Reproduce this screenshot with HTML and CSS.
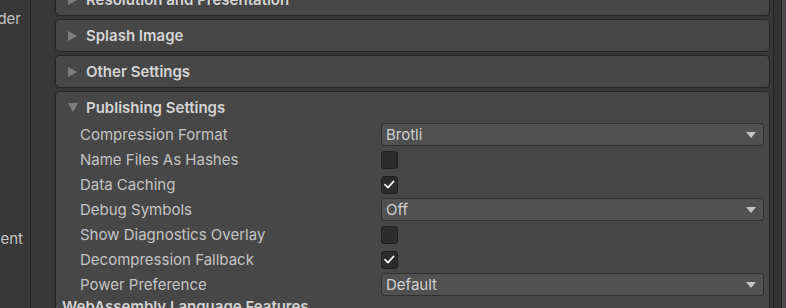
FILE: index.html
```html
<!DOCTYPE html>
<html>
<head>
<meta charset="utf-8">
<link rel="stylesheet" href="styles.css">
</head>
<body>
<div class="app">
  <div class="side">
    <div class="side-item first">der</div>
    <div class="side-item second">ent</div>
  </div>
  <div class="gutter"></div>
  <div class="main">
    <div class="foldout scrolled">
      <div class="fold-head"><span class="arrow right"></span><span class="title">Resolution and Presentation</span></div>
    </div>
    <div class="foldout">
      <div class="fold-head"><span class="arrow right"></span><span class="title">Splash Image</span></div>
    </div>
    <div class="foldout">
      <div class="fold-head"><span class="arrow right"></span><span class="title">Other Settings</span></div>
    </div>
    <div class="foldout open">
      <div class="fold-head"><span class="arrow down"></span><span class="title">Publishing Settings</span></div>
      <div class="rows">
        <div class="row"><span class="label">Compression Format</span><div class="field"><div class="dropdown"><span>Brotli</span><span class="caret"></span></div></div></div>
        <div class="row"><span class="label">Name Files As Hashes</span><div class="field"><div class="check"></div></div></div>
        <div class="row"><span class="label">Data Caching</span><div class="field"><div class="check on"><svg viewBox="0 0 17 17" width="17" height="17"><polyline points="4,8.6 7,11.6 12.6,5.4" fill="none" stroke="#f2f2f2" stroke-width="1.8" stroke-linecap="round" stroke-linejoin="round"/></svg></div></div></div>
        <div class="row"><span class="label">Debug Symbols</span><div class="field"><div class="dropdown"><span>Off</span><span class="caret"></span></div></div></div>
        <div class="row"><span class="label">Show Diagnostics Overlay</span><div class="field"><div class="check"></div></div></div>
        <div class="row"><span class="label">Decompression Fallback</span><div class="field"><div class="check on"><svg viewBox="0 0 17 17" width="17" height="17"><polyline points="4,8.6 7,11.6 12.6,5.4" fill="none" stroke="#f2f2f2" stroke-width="1.8" stroke-linecap="round" stroke-linejoin="round"/></svg></div></div></div>
        <div class="row"><span class="label">Power Preference</span><div class="field"><div class="dropdown"><span>Default</span><span class="caret"></span></div></div></div>
      </div>
      <div class="subhead">WebAssembly Language Features</div>
    </div>
  </div>
  <div class="scroll">
    <div class="scroll-gap"></div>
    <div class="scroll-track"></div>
    <div class="scroll-edge"></div>
  </div>
</div>
</body>
</html>
```
FILE: styles.css
```css
* { box-sizing: border-box; }
html, body {
  margin: 0;
  padding: 0;
  background: #383838;
  width: 786px;
  height: 308px;
  overflow: hidden;
  font-family: Inter, "Noto Sans", sans-serif;
  font-size: 15px;
  color: #c4c4c4;
}
.app {
  display: flex;
  height: 308px;
}
.side {
  width: 31px;
  flex: none;
  background: #383838;
  border-right: 1px solid #242424;
  overflow: hidden;
  display: flex;
  flex-direction: column;
  align-items: flex-end;
}
.side-item {
  line-height: 20px;
  padding-right: 9px;
  white-space: nowrap;
  color: #c4c4c4;
}
.side-item.first { margin-top: 9px; }
.side-item.second { margin-top: 200px; padding-right: 7px; }
.gutter {
  width: 24px;
  flex: none;
  background: #383838;
  border-right: 1px solid #303030;
}
.main {
  flex: none;
  width: 715px;
  display: flex;
  flex-direction: column;
  gap: 3px;
}
.foldout {
  background: #474747;
  border: 1px solid #242424;
  border-radius: 4px;
  flex: none;
}
.foldout.scrolled { margin-top: -17px; }
.fold-head {
  height: 31px;
  display: flex;
  align-items: center;
  padding-left: 12px;
}
.foldout.open .fold-head { height: 30px; }
.arrow {
  width: 0;
  height: 0;
  margin-right: 9px;
}
.arrow.right {
  border-top: 5px solid transparent;
  border-bottom: 5px solid transparent;
  border-left: 9px solid #7f7f7f;
}
.arrow.down {
  border-left: 5px solid transparent;
  border-right: 5px solid transparent;
  border-top: 9px solid #7f7f7f;
  margin-right: 8px;
}
.title {
  font-weight: 600;
  color: #d4d4d4;
}
.rows {
  display: flex;
  flex-direction: column;
}
.row {
  height: 25px;
  display: flex;
  align-items: center;
}
.label {
  width: 325px;
  padding-left: 24px;
  flex: none;
  white-space: nowrap;
}
.field {
  flex: 1;
  padding-right: 5px;
  display: flex;
  align-items: center;
}
.dropdown {
  flex: 1;
  height: 23px;
  background: #515151;
  border: 1px solid #2f2f2f;
  border-radius: 3px;
  display: flex;
  align-items: center;
  justify-content: space-between;
  padding: 0 7px 0 4px;
  color: #d0d0d0;
}
.caret {
  width: 0;
  height: 0;
  border-left: 5px solid transparent;
  border-right: 5px solid transparent;
  border-top: 6px solid #c4c4c4;
}
.check {
  width: 17px;
  height: 18px;
  background: #2b2b2b;
  border: 1px solid #1f1f1f;
  border-radius: 3px;
  display: flex;
  align-items: center;
  justify-content: center;
}
.check svg { display: block; flex: none; }
.subhead {
  font-weight: 600;
  color: #d4d4d4;
  padding-left: 6px;
  line-height: 20px;
}
.scroll {
  flex: none;
  width: 16px;
  display: flex;
}
.scroll-gap { width: 3px; background: #383838; }
.scroll-track {
  width: 9px;
  background: #323232;
  border-left: 1px solid #232323;
  border-right: 1px solid #232323;
}
.scroll-edge { flex: 1; background: #4a4a4a; }
```
